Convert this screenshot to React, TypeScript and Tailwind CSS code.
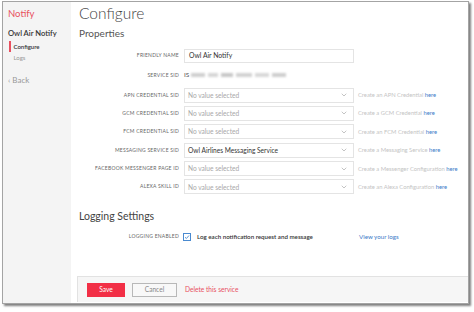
import React from "react";
import { ChevronDown } from "lucide-react";

const font = { fontFamily: "Lato, 'Open Sans', 'Liberation Sans', sans-serif" };

function Label({ children }: { children: React.ReactNode }) {
  return (
    <div className="w-[100px] shrink-0 text-right text-[5px] tracking-[0.25px] uppercase text-[#666] leading-none">
      {children}
    </div>
  );
}

function SelectRow({
  label,
  value,
  placeholder,
  helper,
}: {
  label: string;
  value?: string;
  placeholder?: boolean;
  helper: string;
}) {
  return (
    <div className="flex items-center h-[15px]">
      <Label>{label}</Label>
      <div className="ml-[5px] w-[170px] h-[15px] border border-[#e4e4e4] bg-white flex items-center pl-[3px] pr-[5px] shrink-0">
        <span
          className={
            "flex-1 text-[6.6px] leading-none " +
            (placeholder ? "text-[#a8a8a8]" : "text-[#333]")
          }
        >
          {value}
        </span>
        <ChevronDown size={8} strokeWidth={1.5} className="text-[#888]" />
      </div>
      <div className="ml-[4px] text-[5.8px] leading-none text-[#c4c4c4] whitespace-nowrap">
        {helper} <span className="text-[#3b7bc8]">here</span>
      </div>
    </div>
  );
}

export default function App() {
  return (
    <div className="w-[474px] h-[312px] bg-white pt-[1px] pl-[2px]" style={font}>
      <div className="w-[467px] h-[303px] border border-[#a4a4a4] shadow-[2px_2px_2px_rgba(0,0,0,0.5)] flex overflow-hidden bg-white">
        {/* Sidebar */}
        <div className="w-[68px] shrink-0 bg-[#f4f4f4] flex flex-col pl-[5px] pt-[7px]">
          <div className="text-[9.5px] leading-none text-[#e8505f]">Notify</div>
          <div className="mt-[11px] text-[7.6px] leading-none font-semibold text-[#333]">Owl Air Notify</div>
          <div className="mt-[4px] flex items-center h-[11px]">
            <div className="w-[1.5px] h-[11px] bg-[#e8505f] ml-[1px]" />
            <span className="ml-[3px] text-[6px] font-semibold text-[#333] leading-none">Configure</span>
          </div>
          <div className="mt-[3px] ml-[5.5px] text-[6px] text-[#999] leading-none">Logs</div>
          <div className="mt-[15px] text-[8px] text-[#999] leading-none">‹ Back</div>
        </div>

        {/* Main */}
        <div className="flex-1 flex flex-col">
          <div className="pl-[8px] pt-[4px]">
            <div className="text-[15.5px] leading-none text-[#444] font-light">Configure</div>
            <div className="mt-[6px] text-[10px] leading-none text-[#555]">Properties</div>

            <div className="mt-[11px] flex items-center h-[14px]">
              <Label>Friendly name</Label>
              <div className="ml-[5px] w-[170px] h-[14px] border border-[#e4e4e4] flex items-center pl-[4px] shrink-0">
                <span className="text-[6.8px] leading-none text-[#333]">Owl Air Notify</span>
              </div>
            </div>

            <div className="mt-[5px] flex items-center h-[15px]">
              <Label>Service SID</Label>
              <div className="ml-[5px] flex items-center">
                <span className="text-[6.4px] leading-none text-[#555]">IS</span>
                <div className="ml-[2px] flex items-center gap-[3px] blur-[1px]">
                  <div className="w-[14px] h-[4px] bg-[#cfcfcf]" />
                  <div className="w-[10px] h-[4px] bg-[#d6d6d6]" />
                  <div className="w-[12px] h-[4px] bg-[#c8c8c8]" />
                  <div className="w-[16px] h-[4px] bg-[#d2d2d2]" />
                  <div className="w-[14px] h-[4px] bg-[#d8d8d8]" />
                  <div className="w-[14px] h-[4px] bg-[#cecece]" />
                </div>
              </div>
            </div>

            <div className="mt-[5px] flex flex-col gap-[3.4px]">
              <SelectRow label="APN Credential SID" value="No value selected" placeholder helper="Create an APN Credential" />
              <SelectRow label="GCM Credential SID" value="No value selected" placeholder helper="Create a GCM Credential" />
              <SelectRow label="FCM Credential SID" value="No value selected" placeholder helper="Create an FCM Credential" />
              <SelectRow label="Messaging Service SID" value="Owl Airlines Messaging Service" helper="Create a Messaging Service" />
              <SelectRow label="Facebook Messenger Page ID" value="No value selected" placeholder helper="Create a Messenger Configuration" />
              <SelectRow label="Alexa Skill ID" value="No value selected" placeholder helper="Create an Alexa Configuration" />
            </div>

            <div className="mt-[17px] text-[10.5px] leading-none text-[#444]">Logging Settings</div>

            <div className="mt-[10px] flex items-center h-[10px]">
              <Label>Logging enabled</Label>
              <div className="ml-[4px] w-[8px] h-[8px] border border-[#4a8ad0] flex items-center justify-center bg-white">
                <svg width="6" height="6" viewBox="0 0 6 6">
                  <path d="M1 3.2 L2.4 4.5 L5 1.5" fill="none" stroke="#4a8ad0" strokeWidth="0.9" />
                </svg>
              </div>
              <span className="ml-[6px] w-[162px] text-[6.2px] font-semibold leading-none text-[#333]">
                Log each notification request and message
              </span>
              <span className="text-[6.2px] leading-none text-[#3b7bc8]">View your logs</span>
            </div>
          </div>

          <div className="mt-auto ml-[6px] mb-[1px] h-[26px] border-t border-l border-[#e2e2e2] bg-[#f6f6f6] flex items-center pl-[9px]">
            <div className="w-[38px] h-[14px] bg-[#f22f46] flex items-center justify-center text-[6.6px] text-white leading-none">
              Save
            </div>
            <div className="ml-[7px] w-[45px] h-[14px] border border-[#b8b8b8] bg-[#f8f8f8] flex items-center justify-center text-[6.6px] text-[#888] leading-none">
              Cancel
            </div>
            <div className="ml-[8px] text-[6.6px] text-[#e8505f] leading-none">Delete this service</div>
          </div>
        </div>
      </div>
    </div>
  );
}
